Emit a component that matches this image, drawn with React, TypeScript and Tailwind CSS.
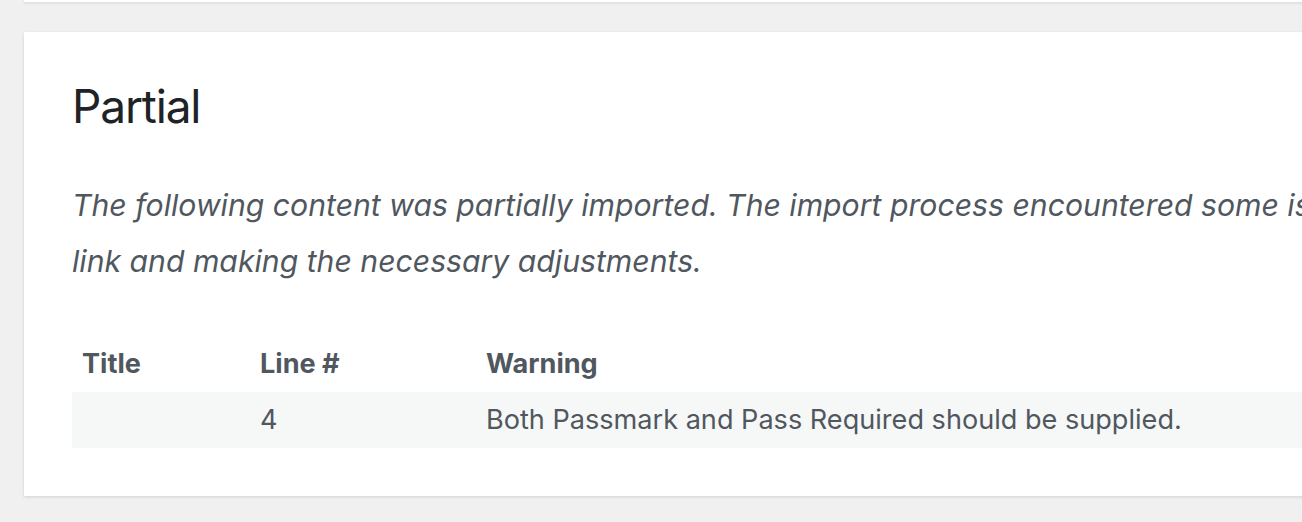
export default function App() {
  return (
    <div
      className="w-[1302px] h-[522px] overflow-hidden bg-[#f0f0f1]"
      style={{ fontFamily: 'Inter, "Noto Sans", sans-serif' }}
    >
      <div className="ml-[24px] w-[1400px] h-[2px] bg-white shadow-[0_1px_3px_rgba(0,0,0,0.13)]" />
      <div className="ml-[24px] mt-[30px] w-[1400px] bg-white shadow-[0_1px_3px_rgba(0,0,0,0.13)] pl-[48px] pt-[46px] pb-[48px]">
        <h2 className="text-[46px] leading-[56px] tracking-[-0.025em] text-[#1d2327] font-normal">Partial</h2>
        <p className="mt-[43px] text-[30.2px] leading-[56px] italic text-[#50575e] whitespace-nowrap">
          The following content was partially imported. The import process encountered some issues. Please review them by following the
          <br />
          link and making the necessary adjustments.
        </p>
        <table className="mt-[47px] border-collapse text-[27.1px] text-[#50575e] w-[1330px]">
          <thead>
            <tr className="h-[56px]">
              <th className="w-[178px] px-[10px] text-left font-bold">Title</th>
              <th className="w-[226px] px-[10px] text-left font-bold">Line #</th>
              <th className="px-[10px] text-left font-bold">Warning</th>
            </tr>
          </thead>
          <tbody>
            <tr className="h-[56px] bg-[#f6f7f7]">
              <td className="px-[10px]"></td>
              <td className="px-[10px]">4</td>
              <td className="px-[10px]">Both Passmark and Pass Required should be supplied.</td>
            </tr>
          </tbody>
        </table>
      </div>
    </div>
  );
}
